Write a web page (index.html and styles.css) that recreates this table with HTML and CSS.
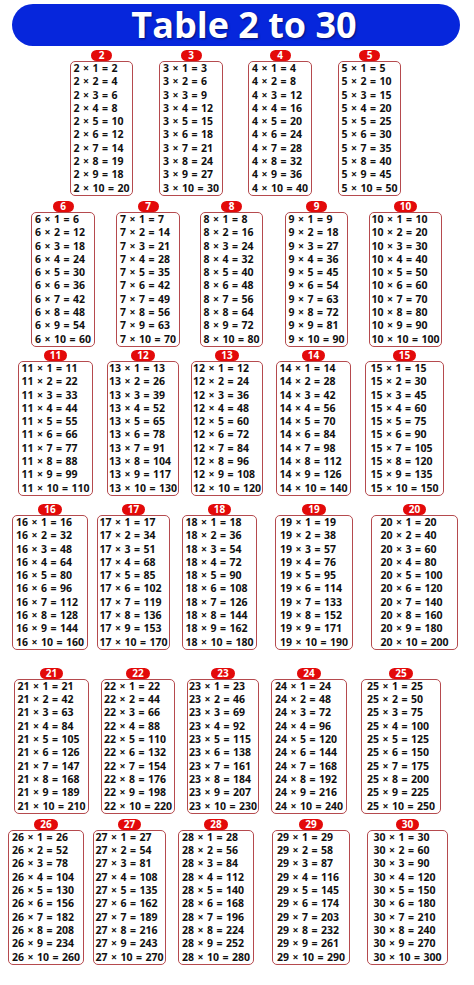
FILE: index.html
```html
<!DOCTYPE html>
<html lang="en">
<head>
<meta charset="utf-8">
<title>Table 2 to 30</title>
<link rel="stylesheet" href="styles.css">
</head>
<body>
<div class="title">Table 2 to 30</div>

<div class="row r1">
  <div class="tbl"><div class="badge">2</div><div class="box"><div class="lines">
    <span>2 × 1 = 2</span><span>2 × 2 = 4</span><span>2 × 3 = 6</span><span>2 × 4 = 8</span><span>2 × 5 = 10</span><span>2 × 6 = 12</span><span>2 × 7 = 14</span><span>2 × 8 = 19</span><span>2 × 9 = 18</span><span>2 × 10 = 20</span>
  </div></div></div>
  <div class="tbl"><div class="badge">3</div><div class="box"><div class="lines">
    <span>3 × 1 = 3</span><span>3 × 2 = 6</span><span>3 × 3 = 9</span><span>3 × 4 = 12</span><span>3 × 5 = 15</span><span>3 × 6 = 18</span><span>3 × 7 = 21</span><span>3 × 8 = 24</span><span>3 × 9 = 27</span><span>3 × 10 = 30</span>
  </div></div></div>
  <div class="tbl"><div class="badge">4</div><div class="box"><div class="lines">
    <span>4 × 1 = 4</span><span>4 × 2 = 8</span><span>4 × 3 = 12</span><span>4 × 4 = 16</span><span>4 × 5 = 20</span><span>4 × 6 = 24</span><span>4 × 7 = 28</span><span>4 × 8 = 32</span><span>4 × 9 = 36</span><span>4 × 10 = 40</span>
  </div></div></div>
  <div class="tbl"><div class="badge">5</div><div class="box"><div class="lines">
    <span>5 × 1 = 5</span><span>5 × 2 = 10</span><span>5 × 3 = 15</span><span>5 × 4 = 20</span><span>5 × 5 = 25</span><span>5 × 6 = 30</span><span>5 × 7 = 35</span><span>5 × 8 = 40</span><span>5 × 9 = 45</span><span>5 × 10 = 50</span>
  </div></div></div>
</div>

<div class="row r2">
  <div class="tbl"><div class="badge">6</div><div class="box"><div class="lines">
    <span>6 × 1 = 6</span><span>6 × 2 = 12</span><span>6 × 3 = 18</span><span>6 × 4 = 24</span><span>6 × 5 = 30</span><span>6 × 6 = 36</span><span>6 × 7 = 42</span><span>6 × 8 = 48</span><span>6 × 9 = 54</span><span>6 × 10 = 60</span>
  </div></div></div>
  <div class="tbl"><div class="badge">7</div><div class="box"><div class="lines">
    <span>7 × 1 = 7</span><span>7 × 2 = 14</span><span>7 × 3 = 21</span><span>7 × 4 = 28</span><span>7 × 5 = 35</span><span>7 × 6 = 42</span><span>7 × 7 = 49</span><span>7 × 8 = 56</span><span>7 × 9 = 63</span><span>7 × 10 = 70</span>
  </div></div></div>
  <div class="tbl"><div class="badge">8</div><div class="box"><div class="lines">
    <span>8 × 1 = 8</span><span>8 × 2 = 16</span><span>8 × 3 = 24</span><span>8 × 4 = 32</span><span>8 × 5 = 40</span><span>8 × 6 = 48</span><span>8 × 7 = 56</span><span>8 × 8 = 64</span><span>8 × 9 = 72</span><span>8 × 10 = 80</span>
  </div></div></div>
  <div class="tbl"><div class="badge">9</div><div class="box"><div class="lines">
    <span>9 × 1 = 9</span><span>9 × 2 = 18</span><span>9 × 3 = 27</span><span>9 × 4 = 36</span><span>9 × 5 = 45</span><span>9 × 6 = 54</span><span>9 × 7 = 63</span><span>9 × 8 = 72</span><span>9 × 9 = 81</span><span>9 × 10 = 90</span>
  </div></div></div>
  <div class="tbl"><div class="badge">10</div><div class="box"><div class="lines">
    <span>10 × 1 = 10</span><span>10 × 2 = 20</span><span>10 × 3 = 30</span><span>10 × 4 = 40</span><span>10 × 5 = 50</span><span>10 × 6 = 60</span><span>10 × 7 = 70</span><span>10 × 8 = 80</span><span>10 × 9 = 90</span><span>10 × 10 = 100</span>
  </div></div></div>
</div>

<div class="row r3">
  <div class="tbl"><div class="badge">11</div><div class="box"><div class="lines">
    <span>11 × 1 = 11</span><span>11 × 2 = 22</span><span>11 × 3 = 33</span><span>11 × 4 = 44</span><span>11 × 5 = 55</span><span>11 × 6 = 66</span><span>11 × 7 = 77</span><span>11 × 8 = 88</span><span>11 × 9 = 99</span><span>11 × 10 = 110</span>
  </div></div></div>
  <div class="tbl"><div class="badge">12</div><div class="box"><div class="lines">
    <span>13 × 1 = 13</span><span>13 × 2 = 26</span><span>13 × 3 = 39</span><span>13 × 4 = 52</span><span>13 × 5 = 65</span><span>13 × 6 = 78</span><span>13 × 7 = 91</span><span>13 × 8 = 104</span><span>13 × 9 = 117</span><span>13 × 10 = 130</span>
  </div></div></div>
  <div class="tbl"><div class="badge">13</div><div class="box"><div class="lines">
    <span>12 × 1 = 12</span><span>12 × 2 = 24</span><span>12 × 3 = 36</span><span>12 × 4 = 48</span><span>12 × 5 = 60</span><span>12 × 6 = 72</span><span>12 × 7 = 84</span><span>12 × 8 = 96</span><span>12 × 9 = 108</span><span>12 × 10 = 120</span>
  </div></div></div>
  <div class="tbl"><div class="badge">14</div><div class="box"><div class="lines">
    <span>14 × 1 = 14</span><span>14 × 2 = 28</span><span>14 × 3 = 42</span><span>14 × 4 = 56</span><span>14 × 5 = 70</span><span>14 × 6 = 84</span><span>14 × 7 = 98</span><span>14 × 8 = 112</span><span>14 × 9 = 126</span><span>14 × 10 = 140</span>
  </div></div></div>
  <div class="tbl"><div class="badge">15</div><div class="box"><div class="lines">
    <span>15 × 1 = 15</span><span>15 × 2 = 30</span><span>15 × 3 = 45</span><span>15 × 4 = 60</span><span>15 × 5 = 75</span><span>15 × 6 = 90</span><span>15 × 7 = 105</span><span>15 × 8 = 120</span><span>15 × 9 = 135</span><span>15 × 10 = 150</span>
  </div></div></div>
</div>

<div class="row r4">
  <div class="tbl"><div class="badge">16</div><div class="box"><div class="lines">
    <span>16 × 1 = 16</span><span>16 × 2 = 32</span><span>16 × 3 = 48</span><span>16 × 4 = 64</span><span>16 × 5 = 80</span><span>16 × 6 = 96</span><span>16 × 7 = 112</span><span>16 × 8 = 128</span><span>16 × 9 = 144</span><span>16 × 10 = 160</span>
  </div></div></div>
  <div class="tbl"><div class="badge">17</div><div class="box"><div class="lines">
    <span>17 × 1 = 17</span><span>17 × 2 = 34</span><span>17 × 3 = 51</span><span>17 × 4 = 68</span><span>17 × 5 = 85</span><span>17 × 6 = 102</span><span>17 × 7 = 119</span><span>17 × 8 = 136</span><span>17 × 9 = 153</span><span>17 × 10 = 170</span>
  </div></div></div>
  <div class="tbl"><div class="badge">18</div><div class="box"><div class="lines">
    <span>18 × 1 = 18</span><span>18 × 2 = 36</span><span>18 × 3 = 54</span><span>18 × 4 = 72</span><span>18 × 5 = 90</span><span>18 × 6 = 108</span><span>18 × 7 = 126</span><span>18 × 8 = 144</span><span>18 × 9 = 162</span><span>18 × 10 = 180</span>
  </div></div></div>
  <div class="tbl"><div class="badge">19</div><div class="box"><div class="lines">
    <span>19 × 1 = 19</span><span>19 × 2 = 38</span><span>19 × 3 = 57</span><span>19 × 4 = 76</span><span>19 × 5 = 95</span><span>19 × 6 = 114</span><span>19 × 7 = 133</span><span>19 × 8 = 152</span><span>19 × 9 = 171</span><span>19 × 10 = 190</span>
  </div></div></div>
  <div class="tbl"><div class="badge">20</div><div class="box"><div class="lines">
    <span>20 × 1 = 20</span><span>20 × 2 = 40</span><span>20 × 3 = 60</span><span>20 × 4 = 80</span><span>20 × 5 = 100</span><span>20 × 6 = 120</span><span>20 × 7 = 140</span><span>20 × 8 = 160</span><span>20 × 9 = 180</span><span>20 × 10 = 200</span>
  </div></div></div>
</div>

<div class="row r5">
  <div class="tbl"><div class="badge">21</div><div class="box"><div class="lines">
    <span>21 × 1 = 21</span><span>21 × 2 = 42</span><span>21 × 3 = 63</span><span>21 × 4 = 84</span><span>21 × 5 = 105</span><span>21 × 6 = 126</span><span>21 × 7 = 147</span><span>21 × 8 = 168</span><span>21 × 9 = 189</span><span>21 × 10 = 210</span>
  </div></div></div>
  <div class="tbl"><div class="badge">22</div><div class="box"><div class="lines">
    <span>22 × 1 = 22</span><span>22 × 2 = 44</span><span>22 × 3 = 66</span><span>22 × 4 = 88</span><span>22 × 5 = 110</span><span>22 × 6 = 132</span><span>22 × 7 = 154</span><span>22 × 8 = 176</span><span>22 × 9 = 198</span><span>22 × 10 = 220</span>
  </div></div></div>
  <div class="tbl"><div class="badge">23</div><div class="box"><div class="lines">
    <span>23 × 1 = 23</span><span>23 × 2 = 46</span><span>23 × 3 = 69</span><span>23 × 4 = 92</span><span>23 × 5 = 115</span><span>23 × 6 = 138</span><span>23 × 7 = 161</span><span>23 × 8 = 184</span><span>23 × 9 = 207</span><span>23 × 10 = 230</span>
  </div></div></div>
  <div class="tbl"><div class="badge">24</div><div class="box"><div class="lines">
    <span>24 × 1 = 24</span><span>24 × 2 = 48</span><span>24 × 3 = 72</span><span>24 × 4 = 96</span><span>24 × 5 = 120</span><span>24 × 6 = 144</span><span>24 × 7 = 168</span><span>24 × 8 = 192</span><span>24 × 9 = 216</span><span>24 × 10 = 240</span>
  </div></div></div>
  <div class="tbl"><div class="badge">25</div><div class="box"><div class="lines">
    <span>25 × 1 = 25</span><span>25 × 2 = 50</span><span>25 × 3 = 75</span><span>25 × 4 = 100</span><span>25 × 5 = 125</span><span>25 × 6 = 150</span><span>25 × 7 = 175</span><span>25 × 8 = 200</span><span>25 × 9 = 225</span><span>25 × 10 = 250</span>
  </div></div></div>
</div>

<div class="row r6">
  <div class="tbl"><div class="badge">26</div><div class="box"><div class="lines">
    <span>26 × 1 = 26</span><span>26 × 2 = 52</span><span>26 × 3 = 78</span><span>26 × 4 = 104</span><span>26 × 5 = 130</span><span>26 × 6 = 156</span><span>26 × 7 = 182</span><span>26 × 8 = 208</span><span>26 × 9 = 234</span><span>26 × 10 = 260</span>
  </div></div></div>
  <div class="tbl"><div class="badge">27</div><div class="box"><div class="lines">
    <span>27 × 1 = 27</span><span>27 × 2 = 54</span><span>27 × 3 = 81</span><span>27 × 4 = 108</span><span>27 × 5 = 135</span><span>27 × 6 = 162</span><span>27 × 7 = 189</span><span>27 × 8 = 216</span><span>27 × 9 = 243</span><span>27 × 10 = 270</span>
  </div></div></div>
  <div class="tbl"><div class="badge">28</div><div class="box"><div class="lines">
    <span>28 × 1 = 28</span><span>28 × 2 = 56</span><span>28 × 3 = 84</span><span>28 × 4 = 112</span><span>28 × 5 = 140</span><span>28 × 6 = 168</span><span>28 × 7 = 196</span><span>28 × 8 = 224</span><span>28 × 9 = 252</span><span>28 × 10 = 280</span>
  </div></div></div>
  <div class="tbl"><div class="badge">29</div><div class="box"><div class="lines">
    <span>29 × 1 = 29</span><span>29 × 2 = 58</span><span>29 × 3 = 87</span><span>29 × 4 = 116</span><span>29 × 5 = 145</span><span>29 × 6 = 174</span><span>29 × 7 = 203</span><span>29 × 8 = 232</span><span>29 × 9 = 261</span><span>29 × 10 = 290</span>
  </div></div></div>
  <div class="tbl"><div class="badge">30</div><div class="box"><div class="lines">
    <span>30 × 1 = 30</span><span>30 × 2 = 60</span><span>30 × 3 = 90</span><span>30 × 4 = 120</span><span>30 × 5 = 150</span><span>30 × 6 = 180</span><span>30 × 7 = 210</span><span>30 × 8 = 240</span><span>30 × 9 = 270</span><span>30 × 10 = 300</span>
  </div></div></div>
</div>
</body>
</html>
```

FILE: styles.css
```css
body {
  margin: 0;
  width: 474px;
  background: #ffffff;
  font-family: "Open Sans", "DejaVu Sans", sans-serif;
  color: #111111;
}

.title {
  margin: 4px 14px 0 12px;
  height: 42px;
  border-radius: 21px;
  background: #0626dc;
  color: #ffffff;
  font-weight: 700;
  font-size: 36px;
  line-height: 42px;
  text-align: center;
  padding-left: 16px;
  box-sizing: border-box;
  text-shadow: 1px 1px 2px rgba(0, 0, 30, 0.55);
}

.row {
  display: grid;
}

.row .tbl:nth-child(1) { grid-column: 2; }
.row .tbl:nth-child(2) { grid-column: 4; }
.row .tbl:nth-child(3) { grid-column: 6; }
.row .tbl:nth-child(4) { grid-column: 8; }
.row .tbl:nth-child(5) { grid-column: 10; }

.r1 {
  margin-top: 4px;
  grid-template-columns: 70px 63px 26px 64px 25px 64px 26px 63px;
}
.r2 {
  margin-top: 5px;
  grid-template-columns: 31px 64px 21px 64px 20px 63px 22px 63px 21px 73px;
}
.r3 {
  margin-top: 3px;
  grid-template-columns: 18px 75px 14px 72px 12px 72px 13px 75px 14px 79px;
}
.r4 {
  margin-top: 8px;
  grid-template-columns: 12px 76px 9px 73px 12px 75px 18px 78px 18px 87px;
}
.r5 {
  margin-top: 18px;
  grid-template-columns: 14px 75px 12px 74px 12px 72px 12px 76px 14px 80px;
}
.r6 {
  margin-top: 5px;
  grid-template-columns: 8px 76px 9px 73px 12px 76px 18px 78px 17px 81px;
}

.tbl {
  display: flex;
  flex-direction: column;
  align-items: center;
}

.badge {
  height: 11px;
  min-width: 21px;
  padding: 0 6px;
  box-sizing: border-box;
  border-radius: 6px;
  background: #e30a0a;
  color: #ffffff;
  font-size: 10px;
  font-weight: 700;
  line-height: 11px;
  text-align: center;
}

.box {
  align-self: stretch;
  border: 1.5px solid #b54a4e;
  border-radius: 5px;
  display: flex;
  justify-content: center;
}

.lines {
  font-size: 10.5px;
  line-height: 13.3px;
  font-weight: 700;
  word-spacing: 0.8px;
  white-space: nowrap;
  color: #111111;
}

.lines span {
  display: block;
}
```
